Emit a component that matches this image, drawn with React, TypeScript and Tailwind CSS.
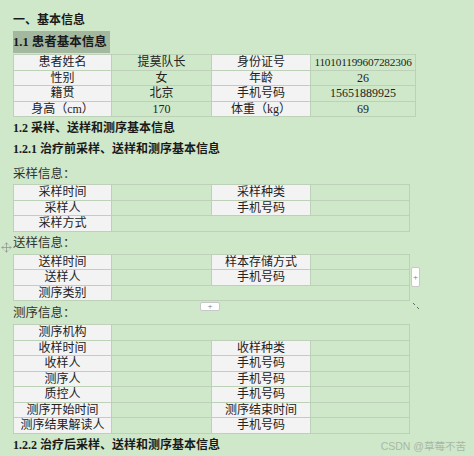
import { Move } from "lucide-react";

type Row = { cells: { text?: string; label?: boolean; span?: number; small?: boolean }[] };

const serif = { fontFamily: '"Liberation Serif", "Noto Sans CJK SC", serif' };

function Grid({ cols, rows }: { cols: string; rows: Row[] }) {
  return (
    <div className={`grid ${cols} gap-px p-px bg-[#bcd1b8] w-fit`}>
      {rows.map((r, i) =>
        r.cells.map((c, j) => (
          <div
            key={`${i}-${j}`}
            className={`h-[14.5px] flex items-center justify-center leading-none text-[#222] whitespace-nowrap ${
              c.small ? "text-[11.3px] tracking-[-0.2px]" : "text-[12px]"
            } ${c.label ? "bg-[#f3f3f3]" : "bg-[#cfe8ca]"} ${c.span === 3 ? "col-span-3" : ""}`}
          >
            {c.text}
          </div>
        ))
      )}
    </div>
  );
}

const L = (text: string) => ({ text, label: true });
const V = (text = "") => ({ text });
const M = { span: 3 };

const patient: Row[] = [
  { cells: [L("患者姓名"), V("提莫队长"), L("身份证号"), { text: "110101199607282306", small: true }] },
  { cells: [L("性别"), V("女"), L("年龄"), V("26")] },
  { cells: [L("籍贯"), V("北京"), L("手机号码"), V("15651889925")] },
  { cells: [L("身高（cm）"), V("170"), L("体重（kg）"), V("69")] },
];

const sampling: Row[] = [
  { cells: [L("采样时间"), V(), L("采样种类"), V()] },
  { cells: [L("采样人"), V(), L("手机号码"), V()] },
  { cells: [L("采样方式"), M] },
];

const shipping: Row[] = [
  { cells: [L("送样时间"), V(), L("样本存储方式"), V()] },
  { cells: [L("送样人"), V(), L("手机号码"), V()] },
  { cells: [L("测序类别"), M] },
];

const sequencing: Row[] = [
  { cells: [L("测序机构"), M] },
  { cells: [L("收样时间"), V(), L("收样种类"), V()] },
  { cells: [L("收样人"), V(), L("手机号码"), V()] },
  { cells: [L("测序人"), V(), L("手机号码"), V()] },
  { cells: [L("质控人"), V(), L("手机号码"), V()] },
  { cells: [L("测序开始时间"), V(), L("测序结束时间"), V()] },
  { cells: [L("测序结果解读人"), V(), L("手机号码"), V()] },
];

function Heading({ children, className = "" }: { children: React.ReactNode; className?: string }) {
  return <div className={`h-4 leading-4 text-[12px] font-bold text-[#1a1a1a] ${className}`}>{children}</div>;
}

function Caption({ children, className = "" }: { children: React.ReactNode; className?: string }) {
  return <div className={`h-4 leading-4 text-[12.5px] text-[#333] ${className}`}>{children}</div>;
}

export default function App() {
  return (
    <div className="relative w-[474px] h-[456px] overflow-hidden bg-[#cfe8ca] pl-[13px] pt-[12px]" style={serif}>
      <Heading>一、基本信息</Heading>
      <div className="mt-[3px] h-[22px] w-[97px] bg-[#a3b89f] flex items-center text-[12.5px] font-bold text-[#1a1a1a]">
        1.1 患者基本信息
      </div>
      <div className="mt-px">
        <Grid cols="grid-cols-[97px_99px_98px_104px]" rows={patient} />
      </div>

      <Heading className="mt-[3px]">1.2 采样、送样和测序基本信息</Heading>
      <Heading className="mt-[5px]">1.2.1 治疗前采样、送样和测序基本信息</Heading>

      <Caption className="mt-[9px]">采样信息：</Caption>
      <div className="mt-[2px]">
        <Grid cols="grid-cols-[97px_99px_98px_98px]" rows={sampling} />
      </div>

      <Caption className="mt-[3px]">送样信息：</Caption>
      <div className="mt-[3px]">
        <Grid cols="grid-cols-[97px_99px_98px_98px]" rows={shipping} />
      </div>

      <Caption className="mt-[4px]">测序信息：</Caption>
      <div className="mt-[3px]">
        <Grid cols="grid-cols-[97px_99px_98px_98px]" rows={sequencing} />
      </div>

      <Heading className="mt-[3px]">1.2.2 治疗后采样、送样和测序基本信息</Heading>

      {/* table editing handles */}
      <div className="absolute left-[1px] top-[242px] text-[#8a8a8a]">
        <Move className="w-[11px] h-[11px]" strokeWidth={1.5} />
      </div>
      <div className="absolute left-[411px] top-[267px] w-[9px] h-[20px] bg-white border border-[#c8c8c8] rounded-[2px] flex items-center justify-center text-[9px] text-[#777] leading-none">
        +
      </div>
      <div className="absolute left-[412px] top-[302px] w-[8px] h-[8px] flex items-center justify-center">
        <svg viewBox="0 0 8 8" className="w-[8px] h-[8px]">
          <path d="M1 1 L3 3 M5 5 L7 7" stroke="#666" strokeWidth="1" />
        </svg>
      </div>
      <div className="absolute left-[200px] top-[302px] w-[20px] h-[9px] bg-white border border-[#c8c8c8] rounded-[2px] flex items-center justify-center text-[9px] text-[#777] leading-none">
        +
      </div>

      <div
        className="absolute right-[8px] top-[439px] text-[10.5px] text-[#a9b7a6] whitespace-nowrap"
        style={{ fontFamily: '"Liberation Sans", "Noto Sans CJK SC", sans-serif' }}
      >
        CSDN @草莓不苦
      </div>
    </div>
  );
}
